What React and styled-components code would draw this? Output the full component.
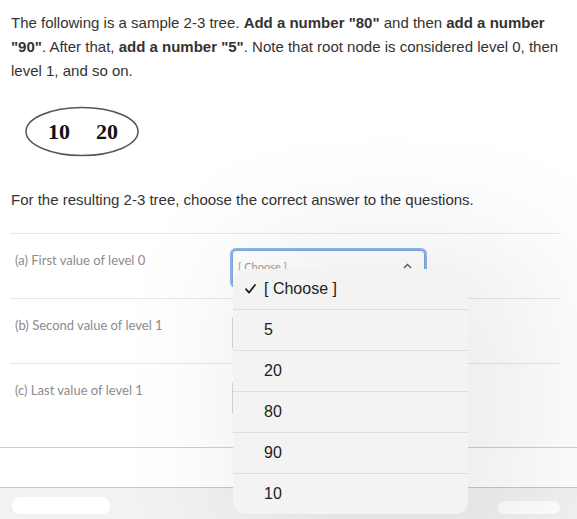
import styled, { createGlobalStyle } from "styled-components";

const GlobalStyle = createGlobalStyle`
  html, body {
    margin: 0;
    padding: 0;
    background: #ffffff;
  }
  body {
    font-family: "Liberation Sans", Arial, sans-serif;
    color: #333333;
    overflow: hidden;
  }
`;

const questions = [
  { id: "a", label: "(a) First value of level 0", open: true },
  { id: "b", label: "(b) Second value of level 1" },
  { id: "c", label: "(c) Last value of level 1" },
];

const options = ["[ Choose ]", "5", "20", "80", "90", "10"];

const TreeNode = () => (
  <TreeSvg width="116" height="52" viewBox="0 0 116 52">
    <ellipse cx="57" cy="25.5" rx="56" ry="24" fill="none" stroke="#555" strokeWidth="1.5" />
    <text x="23" y="33" fontFamily="Liberation Serif, serif" fontWeight="700" fontSize="22" fill="#111">
      10
    </text>
    <text x="71" y="33" fontFamily="Liberation Serif, serif" fontWeight="700" fontSize="22" fill="#111">
      20
    </text>
  </TreeSvg>
);

const Chevron = () => (
  <svg width="9" height="6" viewBox="0 0 9 6">
    <path d="M1 5 L4.5 1.5 L8 5" fill="none" stroke="#555" strokeWidth="1.3" />
  </svg>
);

const CheckMark = () => (
  <svg width="11" height="10" viewBox="0 0 11 10">
    <path d="M1 5.2 L4 8.6 L10 1" fill="none" stroke="#222" strokeWidth="1.8" strokeLinecap="round" strokeLinejoin="round" />
  </svg>
);

const App = () => {
  return (
    <Page>
      <GlobalStyle />
      <Intro>
        The following is a sample 2-3 tree. <b>Add a number "80"</b> and then <b>add a number "90"</b>. After
        that, <b>add a number "5"</b>. Note that root node is considered level 0, then level 1, and so on.
      </Intro>
      <TreeNode />
      <Prompt>For the resulting 2-3 tree, choose the correct answer to the questions.</Prompt>
      <QuestionList>
        {questions.map((q) => (
          <Row key={q.id}>
            <Label>{q.label}</Label>
            <SelectWrap>
              <Select $focused={q.open}>
                <Placeholder>[ Choose ]</Placeholder>
                {q.open && <Chevron />}
              </Select>
              {q.open && (
                <Menu>
                  {options.map((opt, i) => (
                    <MenuItem key={opt}>
                      <Check>{i === 0 && <CheckMark />}</Check>
                      {opt}
                    </MenuItem>
                  ))}
                </Menu>
              )}
            </SelectWrap>
          </Row>
        ))}
      </QuestionList>
      <Spacer />
      <Footer>
        <Blob $w={98} $h={17} />
        <Blob $w={62} $h={13} />
      </Footer>
    </Page>
  );
};

const Page = styled.div`
  display: flex;
  flex-direction: column;
  min-height: 519px;
`;

const Intro = styled.p`
  margin: 11px 0 0 11px;
  width: 550px;
  font-size: 15px;
  line-height: 24px;
  color: #333;

  b {
    font-weight: 700;
  }
`;

const TreeSvg = styled.svg`
  display: block;
  margin: 23px 0 0 25px;
`;

const Prompt = styled.p`
  margin: 30px 0 0 11px;
  font-size: 15px;
  line-height: 24px;
  color: #333;
`;

const QuestionList = styled.div`
  margin-top: 21px;
  padding: 0 17px 19px 10px;
  border-bottom: 1px solid #cfcfcf;
`;

const Row = styled.div`
  display: grid;
  grid-template-columns: 217px 193px;
  padding: 16px 0 12px 5px;
  border-top: 1px solid #e6e6e6;
`;

const Label = styled.div`
  font-family: Lato, "Open Sans", sans-serif;
  font-size: 13px;
  line-height: 20px;
  color: #8c8c8c;
`;

const SelectWrap = styled.div`
  position: relative;
`;

const Select = styled.div`
  height: 36px;
  box-sizing: border-box;
  border: 1px solid ${(p) => (p.$focused ? "#7ea7e0" : "#d2d6d9")};
  border-radius: 4px;
  box-shadow: ${(p) => (p.$focused ? "0 0 0 2px #8eb4e8" : "none")};
  display: flex;
  align-items: center;
  justify-content: space-between;
  padding: 0 12px 4px 5px;
  background: #fff;
`;

const Placeholder = styled.span`
  font-family: Lato, sans-serif;
  font-size: 11px;
  color: #9a9a9a;
`;

const Menu = styled.div`
  position: absolute;
  z-index: 5;
  left: 1px;
  top: 19px;
  width: 235px;
  border-radius: 12px;
  background: #f3f3f3;
  overflow: hidden;
  box-shadow: 40px 10px 130px 40px rgba(0, 0, 0, 0.07);
`;

const MenuItem = styled.div`
  height: 40px;
  display: flex;
  align-items: center;
  padding-left: 12px;
  font-size: 16px;
  color: #222;
  & + & {
    border-top: 1px solid #dedede;
  }
`;

const Check = styled.span`
  display: inline-flex;
  align-items: center;
  width: 19px;
`;

const Spacer = styled.div`
  height: 39px;
  border-bottom: 1px solid #c9c9c9;
`;

const Footer = styled.div`
  flex: 1;
  background: #f2f2f2;
  display: flex;
  justify-content: space-between;
  align-items: flex-start;
  padding: 9px 17px 0 12px;
`;

const Blob = styled.span`
  width: ${(p) => p.$w}px;
  height: ${(p) => p.$h}px;
  margin-top: ${(p) => (p.$h < 15 ? 4 : 0)}px;
  border-radius: 8px;
  background: #fff;
`;

export default App;
